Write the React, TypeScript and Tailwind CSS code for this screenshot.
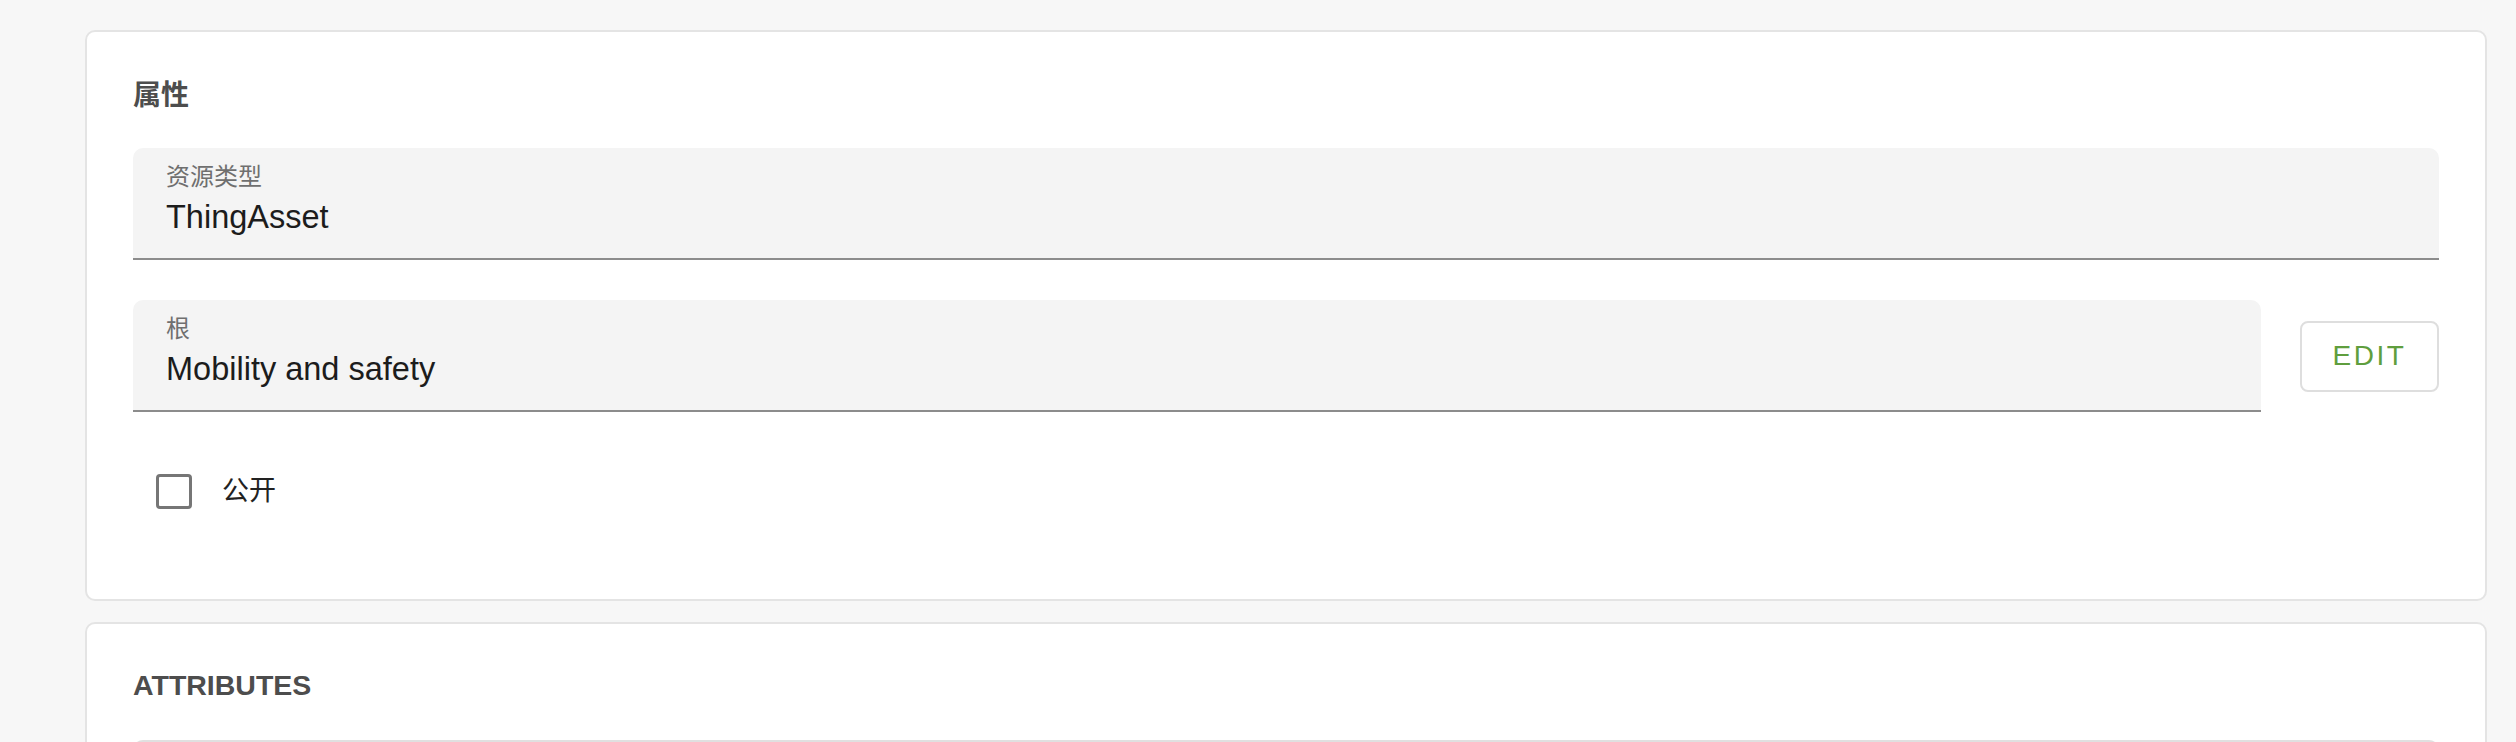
const FONT = "font-['Liberation_Sans','Noto_Sans_CJK_SC',sans-serif]";

function FilledField({ label, value }: { label: string; value: string }) {
  return (
    <div className="h-[112px] rounded-t-[10px] border-b-2 border-[#8c8c8c] bg-[#f4f4f4] pl-[33px] pt-[17px]">
      <div className="text-[24px] leading-[24px] text-[#6f6f6f]">{label}</div>
      <div className="mt-[9px] text-[32.5px] leading-[38px] text-[#1c1c1c]">{value}</div>
    </div>
  );
}

export default function App() {
  return (
    <div className={`h-screen overflow-hidden bg-[#f7f7f7] pl-[85px] pr-[29px] pt-[30px] ${FONT}`}>
      <div className="rounded-[10px] border-2 border-[#e4e4e4] bg-white px-[46px] pb-[90px] pt-[43px]">
        <h2 className="text-[28px] font-bold leading-[42px] text-[#4d4d4d]">属性</h2>

        <div className="mt-[31px]">
          <FilledField label="资源类型" value="ThingAsset" />
        </div>

        <div className="mt-[40px] flex items-center">
          <div className="flex-1">
            <FilledField label="根" value="Mobility and safety" />
          </div>
          <button className="ml-[39px] flex h-[71px] w-[139px] items-center justify-center rounded-[8px] border-2 border-[#dedede] bg-white text-[28px] tracking-[2.5px] text-[#5f9e3e]">
            EDIT
          </button>
        </div>

        <label className="ml-[23px] mt-[62px] flex items-center">
          <span className="h-[35px] w-[36px] rounded-[4px] border-[3px] border-[#767676]" />
          <span className="ml-[30px] text-[27px] leading-[35px] text-[#222222]">公开</span>
        </label>
      </div>

      <div className="mt-[21px] rounded-[10px] border-2 border-[#e4e4e4] bg-white px-[46px] pb-[40px] pt-[40px]">
        <h2 className="text-[28.5px] font-bold leading-[42px] text-[#4d4d4d]">ATTRIBUTES</h2>
        <div className="mt-[34px] h-[120px] rounded-[10px] border-2 border-[#e0e0e0]" />
      </div>
    </div>
  );
}
